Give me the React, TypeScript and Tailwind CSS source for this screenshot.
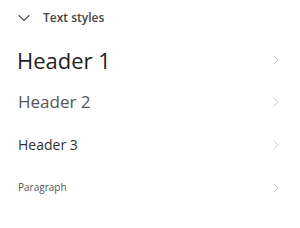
import { ChevronDown, ChevronRight } from "lucide-react";

const rows = [
  { label: "Header 1", cls: "text-[22px] text-[#222] -ml-[1px]", h: "h-[42px]" },
  { label: "Header 2", cls: "text-[17px] text-[#555]", h: "h-[42px]" },
  { label: "Header 3", cls: "text-[14px] text-[#333]", h: "h-[43px]" },
  { label: "Paragraph", cls: "text-[10px] text-[#555]", h: "h-[43px]" },
];

export default function App() {
  return (
    <div className="w-[300px] h-[228px] bg-white font-['Open_Sans',sans-serif]">
      {/* Section header */}
      <div className="flex items-center h-[36px] pl-[14px]">
        <ChevronDown className="w-[20px] h-[20px] text-[#555]" strokeWidth={1.4} />
        <span className="ml-[9px] text-[12px] font-semibold text-[#444]">Text styles</span>
      </div>

      {/* Style rows */}
      <div className="flex flex-col pt-[3px]">
        {rows.map((row) => (
          <div key={row.label} className={`flex items-center justify-between pl-[18px] pr-[16px] ${row.h}`}>
            <span className={row.cls}>{row.label}</span>
            <ChevronRight className="w-[16px] h-[16px] text-[#c4c4c4]" strokeWidth={1.3} />
          </div>
        ))}
      </div>
    </div>
  );
}
